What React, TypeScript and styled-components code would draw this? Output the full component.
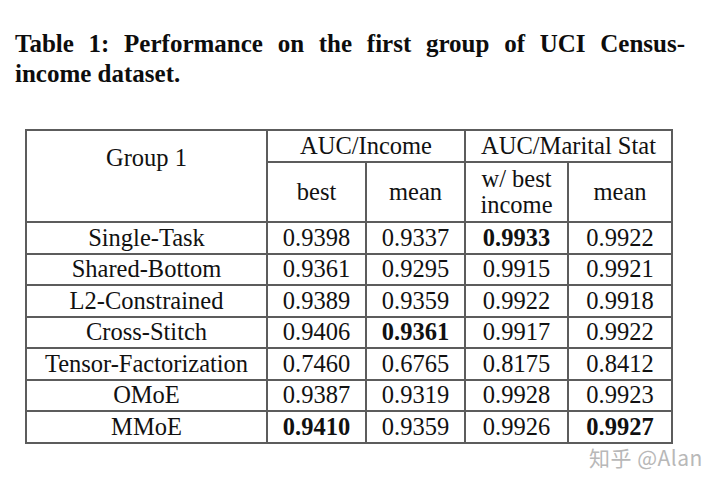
import styled, { createGlobalStyle } from "styled-components";

const GlobalStyle = createGlobalStyle`
  html, body {
    margin: 0;
    padding: 0;
    background: #fff;
  }
  body {
    font-family: "Liberation Serif", "Times New Roman", serif;
    color: #111;
  }
`;

const Page = styled.div`
  position: relative;
  width: 723px;
  height: 485px;
  overflow: hidden;
  background: #fff;
`;

const Caption = styled.div`
  width: 670px;
  margin: 29px 0 0 15px;
  font-size: 25px;
  font-weight: bold;
  line-height: 30px;
  color: #0d0d0d;
`;

const CaptionLine = styled.div<{ $justify?: boolean }>`
  text-align: ${(p) => (p.$justify ? "justify" : "left")};
  text-align-last: ${(p) => (p.$justify ? "justify" : "left")};
  white-space: nowrap;
`;

const Table = styled.table`
  margin: 40px 0 0 25px;
  border-collapse: collapse;
  border: 2px solid #222;
  font-size: 24.5px;
  table-layout: fixed;
  width: 646px;
`;

const Cell = styled.td<{ $bold?: boolean; $h?: number }>`
  border: 2px solid #5c5c5c;
  text-align: center;
  vertical-align: middle;
  padding: 0;
  height: ${(p) => p.$h ?? 29.5}px;
  line-height: 26px;
  font-weight: ${(p) => (p.$bold ? "bold" : "normal")};
  white-space: nowrap;
`;

const Watermark = styled.div`
  position: absolute;
  left: 589px;
  top: 446px;
  font-family: "Noto Sans CJK SC", "Liberation Sans", sans-serif;
  font-size: 21px;
  line-height: 22px;
  color: #b8b8b8;
  letter-spacing: 0.5px;
`;

type Row = { name: string; values: string[]; bold: number[] };

const rows: Row[] = [
  { name: "Single-Task", values: ["0.9398", "0.9337", "0.9933", "0.9922"], bold: [2] },
  { name: "Shared-Bottom", values: ["0.9361", "0.9295", "0.9915", "0.9921"], bold: [] },
  { name: "L2-Constrained", values: ["0.9389", "0.9359", "0.9922", "0.9918"], bold: [] },
  { name: "Cross-Stitch", values: ["0.9406", "0.9361", "0.9917", "0.9922"], bold: [1] },
  { name: "Tensor-Factorization", values: ["0.7460", "0.6765", "0.8175", "0.8412"], bold: [] },
  { name: "OMoE", values: ["0.9387", "0.9319", "0.9928", "0.9923"], bold: [] },
  { name: "MMoE", values: ["0.9410", "0.9359", "0.9926", "0.9927"], bold: [0, 3] },
];

export default function App() {
  return (
    <Page>
      <GlobalStyle />
      <Caption>
        <CaptionLine $justify>Table 1: Performance on the first group of UCI Census-</CaptionLine>
        <CaptionLine>income dataset.</CaptionLine>
      </Caption>
      <Table>
        <colgroup>
          <col style={{ width: 241 }} />
          <col style={{ width: 99 }} />
          <col style={{ width: 99 }} />
          <col style={{ width: 103 }} />
          <col style={{ width: 104 }} />
        </colgroup>
        <tbody>
          <tr>
            <Cell rowSpan={2} style={{ verticalAlign: "top", paddingTop: 14 }}>
              Group 1
            </Cell>
            <Cell colSpan={2} $h={30}>AUC/Income</Cell>
            <Cell colSpan={2} $h={30}>AUC/Marital Stat</Cell>
          </tr>
          <tr>
            <Cell $h={58}>best</Cell>
            <Cell $h={58}>mean</Cell>
            <Cell $h={58}>
              w/ best
              <br />
              income
            </Cell>
            <Cell $h={58}>mean</Cell>
          </tr>
          {rows.map((r) => (
            <tr key={r.name}>
              <Cell>{r.name}</Cell>
              {r.values.map((v, i) => (
                <Cell key={i} $bold={r.bold.includes(i)}>
                  {v}
                </Cell>
              ))}
            </tr>
          ))}
        </tbody>
      </Table>
      <Watermark>知乎 @Alan</Watermark>
    </Page>
  );
}
